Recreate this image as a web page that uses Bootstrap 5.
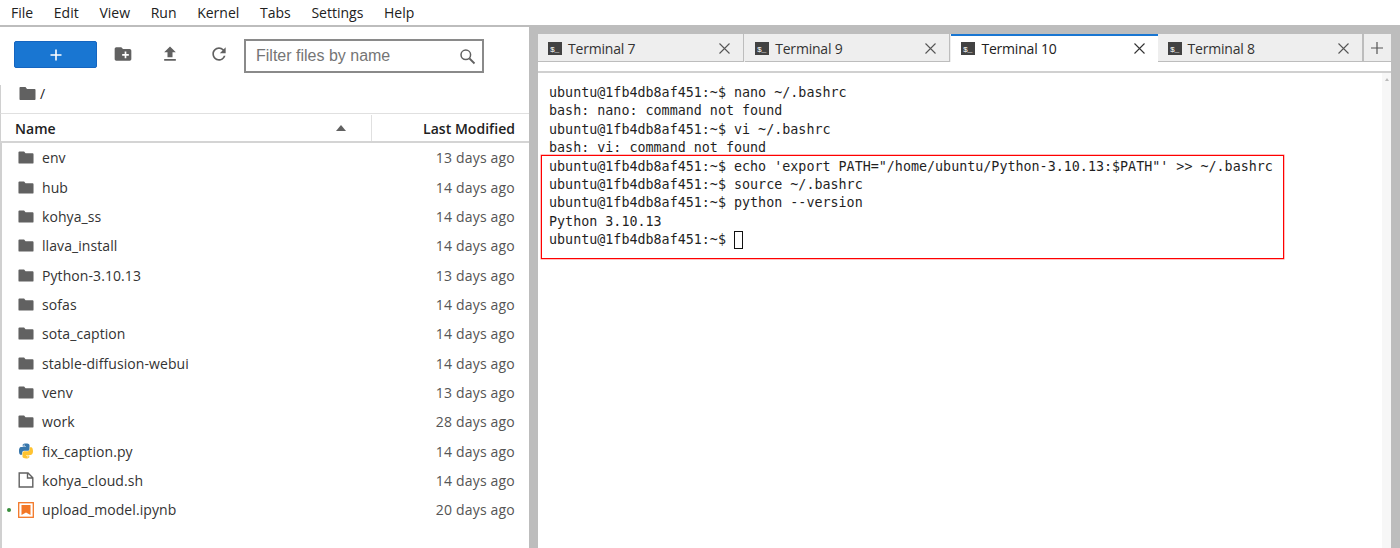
<!DOCTYPE html>
<html lang="en">
<head>
<meta charset="utf-8">
<title>JupyterLab</title>
<link href="https://cdn.jsdelivr.net/npm/bootstrap@5.3.0/dist/css/bootstrap.min.css" rel="stylesheet">
<style>
html,body{height:548px;overflow:hidden;background:#fff}
body{font-family:"Open Sans","Noto Sans",sans-serif;color:#212121;font-size:14px}
.menu-bar{height:27px;border-bottom:2px solid #bdbdbd;padding-left:11px;gap:20.7px;font-size:14px;line-height:25px}
.main-area{height:521px}
.file-pane{width:529px;flex:none;position:relative}
.tool-row{height:58px;padding:14px 0 0 14px}
.new-btn{width:83px;height:27px;background:#1976d2;border:1px solid #1565c0;border-radius:2px;color:#fff}
.tool-ic{width:20px;height:20px;color:#616161;margin-top:3px}
.tool-gap1{margin-left:16px}.tool-gap2{margin-left:27px}.tool-gap3{margin-left:29px}
.filter-box{width:240px;height:34px;margin-left:15px;margin-top:-2px;border:2px solid #8a8a8a;padding:0 6px 0 10px;font-family:"Liberation Sans",sans-serif;font-size:16px;color:#757575}
.crumb-row{height:29px;padding:0 0 12px 18px;border-left:1px solid #d0d0d0;border-bottom:1px solid #e0e0e0;font-size:14px}
.head-row{height:29px;padding-top:1px;border-left:1px solid #d0d0d0;border-bottom:2px solid #d4d4d4;font-weight:600;font-size:14px;letter-spacing:.03px}
.head-name{width:371px;border-right:1px solid #e0e0e0;padding:0 25px 0 14px}
.head-mod{flex:1;text-align:right;padding-right:14px}
.file-list{border-left:2px solid #d0d0d0;height:405px}
.file-row{height:29.35px;position:relative;font-size:14px;letter-spacing:.08px;color:#333}
.file-ic{width:16px;margin-left:16px;margin-right:8px;flex:none}
.file-date{margin-left:auto;padding-right:14px;color:#555;letter-spacing:.2px}
.run-dot{position:absolute;left:5px;top:13px;width:4px;height:4px;border-radius:50%;background:#388e3c}
.dock-pane{flex:1;background:#bdbdbd;padding:7px 9px 0 9px}
.dock-inner{background:#fff;height:100%}
.tab-strip{height:28px;background:#eee}
.term-tab{width:205.2px;height:28px;background:#eee;border-right:1px solid #bdbdbd;border-bottom:1px solid #bdbdbd;padding:2px 13px 0 10px;font-size:14px;letter-spacing:-.2px;color:#333;margin-right:1px;flex:none}
.term-tab.tab-first{width:206.2px}
.term-tab.is-on{background:#fff;border-top:2px solid #1976d2;border-bottom:0;border-right:0;padding:0 13px 1px 10px;width:206.2px;margin-right:0;color:#212121}
.term-ic{width:14px;height:13px;background:#424242;margin-right:6px;flex:none}
.tab-x{margin-left:auto;width:11px;height:11px;flex:none}
.tab-plus{width:28px;height:28px;background:#eee;border-bottom:1px solid #bdbdbd;border-left:1px solid #bdbdbd;margin-left:-1px}
.tab-gap{height:11px;border-bottom:2px solid #d0d0d0;background:#fff}
.term-body{position:relative;padding:11px 0 0 11px;font-family:"DejaVu Sans Mono",monospace;font-size:13.36px;line-height:18.4px;color:#1f1f1f;white-space:pre;height:475px}
.term-line{height:18.4px}
.cursor-box{display:inline-block;width:9px;height:18px;border:1px solid #111;vertical-align:top}
.red-frame{position:absolute;left:3px;top:82px;width:743px;height:104px;border:1px solid #f00;box-shadow:0 0 0 .5px rgba(255,0,0,.5);pointer-events:none}
.scroll-track{position:absolute;right:0;top:0;width:9px;height:100%;background:#f7f7f7}
.scroll-arrow{position:absolute;right:2px;top:5px;width:0;height:0;border:2.5px solid transparent;border-top:0;border-bottom:3px solid #bbb}
</style>
</head>
<body>
<div class="menu-bar d-flex">
<span>File</span><span>Edit</span><span>View</span><span>Run</span><span>Kernel</span><span>Tabs</span><span>Settings</span><span>Help</span>
</div>
<div class="main-area d-flex">
<div class="file-pane">
<div class="tool-row d-flex align-items-start">
<div class="new-btn d-flex align-items-center justify-content-center"><svg width="14" height="14" viewBox="0 0 14 14"><path d="M7 1.5v11M1.5 7h11" stroke="#fff" stroke-width="1.6"/></svg></div>
<svg class="tool-ic tool-gap1" viewBox="0 0 24 24"><path fill="currentColor" d="M20 6h-8l-2-2H4c-1.1 0-2 .9-2 2v12c0 1.1.9 2 2 2h16c1.1 0 2-.9 2-2V8c0-1.100-.9-2-2-2zm-1 8h-3v3h-2v-3h-3v-2h3V9h2v3h3v2z"/></svg>
<svg class="tool-ic tool-gap2" viewBox="0 0 24 24"><path fill="currentColor" d="M9 16h6v-6h4l-7-7-7 7h4zm-4 2h14v2H5z"/></svg>
<svg class="tool-ic tool-gap3" viewBox="0 0 24 24"><path fill="currentColor" d="M17.65 6.350A7.958 7.958 0 0 0 12 4c-4.420 0-7.990 3.580-7.990 8s3.570 8 7.990 8c3.730 0 6.840-2.550 7.730-6h-2.080A5.990 5.990 0 0 1 12 18c-3.310 0-6-2.690-6-6s2.690-6 6-6c1.660 0 3.140.69 4.220 1.780L13 11h7V4l-2.350 2.350z"/></svg>
<div class="filter-box d-flex align-items-center justify-content-between"><span>Filter files by name</span><svg width="17" height="17" viewBox="0 0 17 17"><circle cx="6.800" cy="6.800" r="4.800" fill="none" stroke="#616161" stroke-width="1.500"/><path d="M10.500 10.500l5 5" stroke="#616161" stroke-width="1.800"/></svg></div>
</div>
<div class="crumb-row d-flex align-items-center">
<svg width="17" height="15" viewBox="0 0 17 15"><path fill="#616161" d="M1.500 1h5l1.500 2h7.500c.6 0 1 .4 1 1v9c0 .6-.4 1-1 1h-14c-.6 0-1-.4-1-1V2c0-.6.400-1 1-1z"/></svg>
<span class="ms-1">/</span>
</div>
<div class="head-row d-flex align-items-center">
<div class="head-name d-flex align-items-center justify-content-between h-100"><span>Name</span><svg width="10" height="6" viewBox="0 0 10 6"><path fill="#616161" d="M5 0l5 6H0z"/></svg></div>
<div class="head-mod">Last Modified</div>
</div>
<div class="file-list" id="files"></div>
</div>
<div class="dock-pane">
<div class="dock-inner">
<div class="tab-strip d-flex">
<div class="term-tab tab-first d-flex align-items-center"><span class="term-ic d-flex"><svg viewBox="0 0 14 13"><text x="2" y="9.500" font-size="8" font-family="Liberation Mono" fill="#fff">$_</text></svg></span>Terminal 7<svg class="tab-x" viewBox="0 0 11 11"><path d="M.5.500l10 10M10.500.500l-10 10" stroke="#555" stroke-width="1.100"/></svg></div>
<div class="term-tab d-flex align-items-center"><span class="term-ic d-flex"><svg viewBox="0 0 14 13"><text x="2" y="9.500" font-size="8" font-family="Liberation Mono" fill="#fff">$_</text></svg></span>Terminal 9<svg class="tab-x" viewBox="0 0 11 11"><path d="M.5.500l10 10M10.500.500l-10 10" stroke="#555" stroke-width="1.100"/></svg></div>
<div class="term-tab is-on d-flex align-items-center"><span class="term-ic d-flex"><svg viewBox="0 0 14 13"><text x="2" y="9.500" font-size="8" font-family="Liberation Mono" fill="#fff">$_</text></svg></span>Terminal 10<svg class="tab-x" viewBox="0 0 11 11"><path d="M.5.500l10 10M10.500.500l-10 10" stroke="#333" stroke-width="1.100"/></svg></div>
<div class="term-tab d-flex align-items-center"><span class="term-ic d-flex"><svg viewBox="0 0 14 13"><text x="2" y="9.500" font-size="8" font-family="Liberation Mono" fill="#fff">$_</text></svg></span>Terminal 8<svg class="tab-x" viewBox="0 0 11 11"><path d="M.5.500l10 10M10.500.500l-10 10" stroke="#555" stroke-width="1.100"/></svg></div>
<div class="tab-plus d-flex align-items-center justify-content-center"><svg width="12" height="12" viewBox="0 0 12 12"><path d="M6 0v12M0 6h12" stroke="#555" stroke-width="1.200"/></svg></div>
</div>
<div class="tab-gap"></div>
<div class="term-body"><div class="scroll-track"><div class="scroll-arrow"></div></div><div class="term-line">ubuntu@1fb4db8af451:~$ nano ~/.bashrc</div><div class="term-line">bash: nano: command not found</div><div class="term-line">ubuntu@1fb4db8af451:~$ vi ~/.bashrc</div><div class="term-line">bash: vi: command not found</div><div class="term-line">ubuntu@1fb4db8af451:~$ echo 'export PATH="/home/ubuntu/Python-3.10.13:$PATH"' &gt;&gt; ~/.bashrc</div><div class="term-line">ubuntu@1fb4db8af451:~$ source ~/.bashrc</div><div class="term-line">ubuntu@1fb4db8af451:~$ python --version</div><div class="term-line">Python 3.10.13</div><div class="term-line">ubuntu@1fb4db8af451:~$ <span class="cursor-box"></span></div><div class="red-frame"></div></div>
</div>
</div>
</div>
<script>
const folder='<svg width="17" height="15" viewBox="0 0 17 15"><path fill="#616161" d="M1.500 1h5l1.500 2h7.500c.6 0 1 .4 1 1v9c0 .6-.4 1-1 1h-14c-.6 0-1-.4-1-1V2c0-.6.400-1 1-1z"/></svg>';
const py='<svg width="16" height="16" viewBox="0 0 16 16"><path fill="#3776ab" d="M7.900.5C4.500.5 4.700 2 4.700 2v1.600H8v.5H3.300S1 3.800 1 7.900s2 3.900 2 3.900h1.200v-1.900S4.100 7.800 6.200 7.800h3.300s2 0 2-1.900V2.400S11.800.500 7.900.500zM6.100 1.600a.6.600 0 1 1 0 1.200.6.600 0 0 1 0-1.200z"/><path fill="#ffc331" d="M8.100 15.500c3.400 0 3.200-1.500 3.200-1.500v-1.600H8v-.5h4.700s2.300.3 2.300-3.800-2-3.900-2-3.900h-1.200v1.900s.1 2.100-2 2.100H6.500s-2 0-2 1.900v3.500s-.3 1.900 3.600 1.900zm1.800-1.100a.6.600 0 1 1 0-1.200.6.600 0 0 1 0 1.200z"/></svg>';
const doc='<svg width="16" height="16" viewBox="0 0 16 16"><path fill="none" stroke="#616161" stroke-width="1.400" d="M1.200 1h8.800l4.800 4.800v9.200H1.200zM9.500 1v5h5.300"/></svg>';
const nb='<svg width="16" height="16" viewBox="0 0 16 16"><rect x=".7" y=".7" width="14.600" height="14.600" fill="#fff" stroke="#f37726" stroke-width="1.300"/><path fill="#f37726" d="M3.500 3h9v10L8 10.500 3.500 13z"/></svg>';
const rows=[["env","13",folder],["hub","14",folder],["kohya_ss","14",folder],["llava_install","14",folder],["Python-3.10.13","13",folder],["sofas","14",folder],["sota_caption","14",folder],["stable-diffusion-webui","14",folder],["venv","13",folder],["work","28",folder],["fix_caption.py","14",py],["kohya_cloud.sh","14",doc],["upload_model.ipynb","20",nb]];
document.getElementById('files').innerHTML=rows.map((r,i)=>`<div class="file-row d-flex align-items-center">${i==12?'<span class="run-dot"></span>':''}<span class="file-ic d-flex">${r[2]}</span><span>${r[0]}</span><span class="file-date">${r[1]} days ago</span></div>`).join('');
</script>
<script src="https://cdn.jsdelivr.net/npm/bootstrap@5.3.0/dist/js/bootstrap.bundle.min.js"></script>
</body>
</html>
